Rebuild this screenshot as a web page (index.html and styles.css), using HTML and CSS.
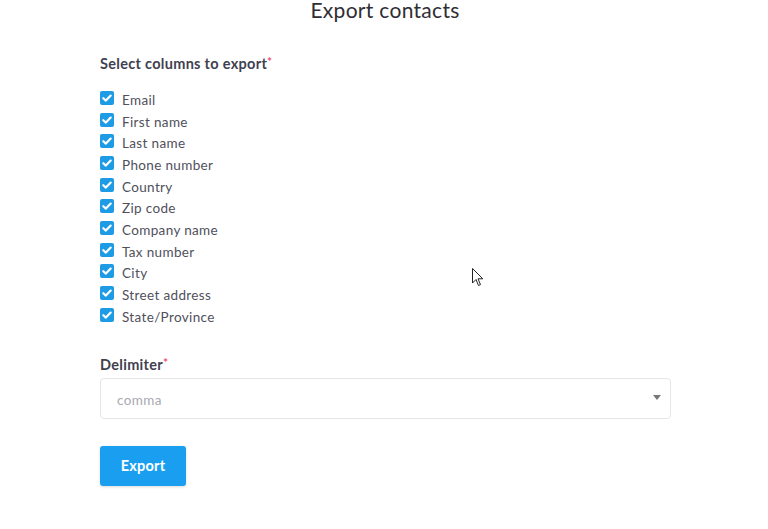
FILE: index.html
```html
<!DOCTYPE html>
<html>
<head>
<meta charset="utf-8">
<link rel="stylesheet" href="styles.css">
</head>
<body>
<div class="page">
  <h1 class="title">Export contacts</h1>
  <div class="form">
    <div class="label">Select columns to export<span class="req">*</span></div>
    <ul class="checks">
      <li><span class="box"><svg viewBox="0 0 14 14"><path d="M3.3 7.2 L5.9 9.6 L10.7 4.6" /></svg></span>Email</li>
      <li><span class="box"><svg viewBox="0 0 14 14"><path d="M3.3 7.2 L5.9 9.6 L10.7 4.6" /></svg></span>First name</li>
      <li><span class="box"><svg viewBox="0 0 14 14"><path d="M3.3 7.2 L5.9 9.6 L10.7 4.6" /></svg></span>Last name</li>
      <li><span class="box"><svg viewBox="0 0 14 14"><path d="M3.3 7.2 L5.9 9.6 L10.7 4.6" /></svg></span>Phone number</li>
      <li><span class="box"><svg viewBox="0 0 14 14"><path d="M3.3 7.2 L5.9 9.6 L10.7 4.6" /></svg></span>Country</li>
      <li><span class="box"><svg viewBox="0 0 14 14"><path d="M3.3 7.2 L5.9 9.6 L10.7 4.6" /></svg></span>Zip code</li>
      <li><span class="box"><svg viewBox="0 0 14 14"><path d="M3.3 7.2 L5.9 9.6 L10.7 4.6" /></svg></span>Company name</li>
      <li><span class="box"><svg viewBox="0 0 14 14"><path d="M3.3 7.2 L5.9 9.6 L10.7 4.6" /></svg></span>Tax number</li>
      <li><span class="box"><svg viewBox="0 0 14 14"><path d="M3.3 7.2 L5.9 9.6 L10.7 4.6" /></svg></span>City</li>
      <li><span class="box"><svg viewBox="0 0 14 14"><path d="M3.3 7.2 L5.9 9.6 L10.7 4.6" /></svg></span>Street address</li>
      <li><span class="box"><svg viewBox="0 0 14 14"><path d="M3.3 7.2 L5.9 9.6 L10.7 4.6" /></svg></span>State/Province</li>
    </ul>
    <div class="label delim">Delimiter<span class="req">*</span></div>
    <div class="select">
      <span class="placeholder">comma</span>
      <span class="caret"></span>
    </div>
    <button class="btn">Export</button>
  </div>
  <svg class="cursor" width="12" height="19" viewBox="0 0 12 19"><path d="M0.5 0.5 L0.5 15 L4 11.5 L6.5 17.5 L8.5 16.6 L6 10.8 L10.8 10.8 Z" fill="#fff" stroke="#222" stroke-width="1"/></svg>
</div>
</body>
</html>
```

FILE: styles.css
```css
html, body {
  margin: 0;
  padding: 0;
  background: #fff;
}
body {
  font-family: Lato, "Open Sans", sans-serif;
  color: #3d3d4a;
}
.page {
  position: relative;
  width: 768px;
  height: 529px;
  overflow: hidden;
}
.title {
  margin: 0;
  padding: 0 0 0 2px;
  text-align: center;
  font-weight: 400;
  font-size: 21px;
  line-height: 20px;
  color: #2e2e33;
  letter-spacing: 0.3px;
}
.form {
  padding-left: 100px;
  padding-top: 32px;
  width: 571px;
}
.label {
  font-size: 14.5px;
  font-weight: 700;
  color: #3f4150;
  line-height: 20px;
  letter-spacing: 0.3px;
}
.req {
  color: #f0506e;
  font-size: 12px;
  vertical-align: 3px;
}
.checks {
  list-style: none;
  margin: 15px 0 0 0;
  padding: 0;
}
.checks li {
  display: flex;
  align-items: center;
  height: 21.7px;
  font-size: 13.5px;
  color: #50505c;
  letter-spacing: 0.35px;
}
.box {
  width: 14px;
  height: 14px;
  border-radius: 2px;
  background: #1e9be5;
  margin-right: 8px;
  display: flex;
  margin-top: -4px;
}
.box svg {
  width: 14px;
  height: 14px;
  fill: none;
  stroke: #fff;
  stroke-width: 2.2;
  stroke-linecap: round;
  stroke-linejoin: round;
}
.delim {
  margin-top: 25px;
}
.select {
  margin-top: 3px;
  height: 39px;
  border: 1px solid #e6e6ea;
  border-radius: 4px;
  display: flex;
  align-items: center;
  justify-content: space-between;
  padding: 0 9px 0 16px;
}
.placeholder {
  font-size: 13.5px;
  color: #a9a9b3;
  letter-spacing: 0.4px;
  margin-top: 4px;
}
.caret {
  width: 0;
  height: 0;
  border-left: 4px solid transparent;
  border-right: 4px solid transparent;
  border-top: 5px solid #777;
  margin-top: -2px;
}
.btn {
  margin-top: 27px;
  width: 86px;
  height: 40px;
  border: none;
  border-radius: 3px;
  background: #1a9ff0;
  color: #fff;
  font-family: Lato, "Open Sans", sans-serif;
  font-weight: 700;
  font-size: 14.5px;
  letter-spacing: 0.2px;
  box-shadow: 0 1px 3px rgba(0,0,0,0.15);
  padding: 0;
}
.cursor {
  position: absolute;
  left: 472px;
  top: 268px;
}
```
